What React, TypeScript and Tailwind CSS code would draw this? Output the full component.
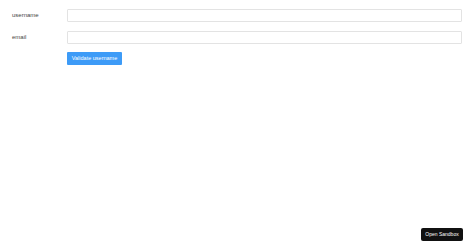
import React from 'react';

const Row = ({ label }: { label: string }) => (
  <div className="flex items-center h-[13px]">
    <label className="w-[55px] shrink-0 text-[6px] text-[#444]">{label}</label>
    <input
      className="flex-1 h-[13px] border border-[#e3e3e3] rounded-[1px] bg-white outline-none"
      type="text"
    />
  </div>
);

export default function App() {
  return (
    <div className="relative w-[474px] h-[248px] bg-white font-['Liberation_Sans',Arial,sans-serif]">
      <div className="flex flex-col pt-[9px] pl-[12px] pr-[12px]">
        <Row label="username" />
        <div className="h-[9px]" />
        <Row label="email" />
        <div className="mt-[8px] pl-[55px]">
          <button className="h-[13px] w-[55px] bg-[#3d9bf7] text-white text-[5.5px] rounded-[1px] flex items-center justify-center">
            Validate username
          </button>
        </div>
      </div>
      <button className="fixed bottom-[7px] right-[11px] h-[13px] w-[42px] bg-[#111] text-white text-[5px] rounded-[2px] flex items-center justify-center">
        Open Sandbox
      </button>
    </div>
  );
}
